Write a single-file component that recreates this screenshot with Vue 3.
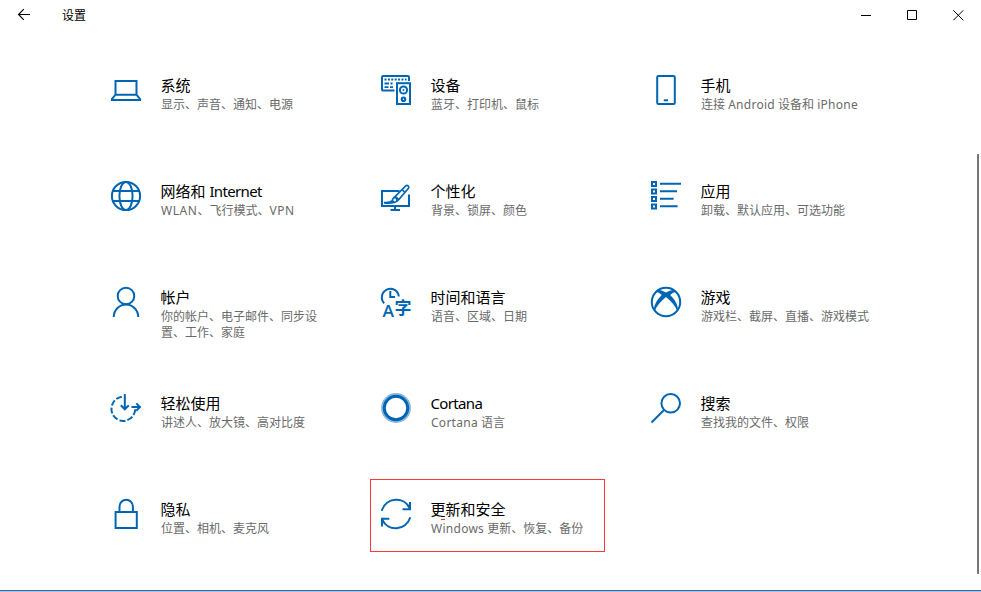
<script setup>
const items = [
  { icon: 'system', title: '系统', desc: '显示、声音、通知、电源' },
  { icon: 'devices', title: '设备', desc: '蓝牙、打印机、鼠标' },
  { icon: 'phone', title: '手机', desc: '连接 Android 设备和 iPhone' },
  { icon: 'network', title: '网络和 Internet', desc: 'WLAN、飞行模式、VPN' },
  { icon: 'personal', title: '个性化', desc: '背景、锁屏、颜色' },
  { icon: 'apps', title: '应用', desc: '卸载、默认应用、可选功能' },
  { icon: 'account', title: '帐户', desc: '你的帐户、电子邮件、同步设置、工作、家庭' },
  { icon: 'time', title: '时间和语言', desc: '语音、区域、日期' },
  { icon: 'gaming', title: '游戏', desc: '游戏栏、截屏、直播、游戏模式' },
  { icon: 'ease', title: '轻松使用', desc: '讲述人、放大镜、高对比度' },
  { icon: 'cortana', title: 'Cortana', desc: 'Cortana 语言' },
  { icon: 'search', title: '搜索', desc: '查找我的文件、权限' },
  { icon: 'privacy', title: '隐私', desc: '位置、相机、麦克风' },
  { icon: 'update', title: '更新和安全', desc: 'Windows 更新、恢复、备份', marked: true },
]

// Latin runs get their own tracking next to the full-width characters.
function runs(text) {
  return text
    .split(/([A-Za-z]+)/)
    .filter(Boolean)
    .map((value) => ({ value, latin: /^[A-Za-z]/.test(value), caps: /^[A-Z]+$/.test(value) }))
}
</script>

<template>
  <div class="window">
    <header class="titlebar">
      <svg class="back" width="14" height="14" viewBox="0 0 14 14"><path d="M13 6.500H1.500M6.800 1.200 1.500 6.500l5.300 5.300" /></svg>
      <span class="caption">设置</span>
      <div class="controls">
        <svg width="11" height="11" viewBox="0 0 11 11"><path d="M0 5.5h10" /></svg>
        <svg width="11" height="11" viewBox="0 0 11 11"><path d="M.5.5h9v9h-9z" /></svg>
        <svg width="11" height="11" viewBox="0 0 11 11"><path d="m.3.3 10 10M10.300.3l-10 10" /></svg>
      </div>
    </header>

    <main class="body">
      <div class="grid">
        <div v-for="item in items" :key="item.icon" class="item" :class="{ marked: item.marked }">
          <svg class="icon" width="32" height="32" viewBox="0 0 32 32">
            <g v-if="item.icon === 'system'">
              <path d="M5.500 20.700V7h21v13.700M5.500 20.700h21l3.600 4.500V26H1.900v-.8z" />
            </g>
            <g v-else-if="item.icon === 'devices'">
              <path d="M14.500 16.600H3.200A1.200 1.200 0 0 1 2 15.400V3.200A1.200 1.200 0 0 1 3.200 2h24.600a1.200 1.200 0 0 1 1.200 1.200V7" />
              <path class="thin" d="M4.500 5.500h22" stroke-dasharray="2 1.400" />
              <path class="thin" d="M4.500 9.500h4.500M10.500 9.500h2M4.500 13.200h4M10 13.200h3" />
              <rect x="17" y="9.200" width="13" height="20.800" />
              <circle cx="23.500" cy="16" r="3.600" />
              <circle class="solid" cx="23.500" cy="16" r="1" />
              <circle class="solid" cx="23.500" cy="25.300" r="2.800" />
              <circle class="hole" cx="23.500" cy="25.300" r=".7" />
            </g>
            <g v-else-if="item.icon === 'phone'">
              <rect x="7.200" y="2" width="17.600" height="28" rx="1.200" />
              <path d="M13.800 26.300H18" />
            </g>
            <g v-else-if="item.icon === 'network'">
              <circle cx="16" cy="16" r="14.100" />
              <ellipse cx="16" cy="16" rx="6.600" ry="14.100" />
              <path d="M3 10.900h26M3 21.100h26" />
            </g>
            <g v-else-if="item.icon === 'personal'">
              <path d="M19.500 11H2v15h27V14.500M15 26v4M10.500 30h9.500" />
              <path class="edge" d="M26 5.700c1.400-1.100 3.600.9 2.500 2.500L18.800 19.600l-3.600-3.200zM22.500 10l3 2.800" />
              <path class="solid" d="M15 16c-2 .5-2.700 2-3.200 3.600-.6 1.800-3 2.200-7.800 2.100v2c6 .5 10 .2 12.700-1.400 1.300-.8 2-1.500 2.300-2.600z" />
              <circle class="hole" cx="14.700" cy="20" r="1.400" />
            </g>
            <g v-else-if="item.icon === 'apps'">
              <path d="M2 2h4v4H2zM2 9.500h4v4H2zM2 17h4v4H2zM2 24.500h4v4H2zM10 3.800h21M10 11.300h17M10 18.800h13.600M10 26.300h17.600" />
            </g>
            <g v-else-if="item.icon === 'account'">
              <circle cx="16" cy="10" r="8.300" />
              <path d="M3.700 31C4 23.600 9.500 18.400 16 18.400S28 23.600 28.300 31" />
            </g>
            <g v-else-if="item.icon === 'time'">
              <path d="M4.200 17.200A8.500 8.500 0 1 1 18.800 10.500M10.300 5v6H15" />
              <text class="glyph latin-glyph" x="2.600" y="31" font-size="17" textLength="11.500" lengthAdjust="spacingAndGlyphs">A</text>
              <text class="glyph" x="14.600" y="27.500" font-size="17">字</text>
            </g>
            <g v-else-if="item.icon === 'gaming'">
              <circle cx="16" cy="16" r="14.200" />
              <path class="solid" d="M5.300 6C7.500 3.200 10.500 3.400 16 6.600c5.500-3.200 8.500-3.400 10.700-.6-2.100-.3-4.300.8-6.500 3.100 5.800 5.600 8.800 11.900 7.300 16.600-1.900-5.200-5.900-10.300-11.500-14.700C10.400 15.400 6.400 20.500 4.500 25.700 3 21 6 14.700 11.800 9.100 9.600 6.800 7.400 5.700 5.300 6z" />
            </g>
            <g v-else-if="item.icon === 'ease'">
              <path d="M11.800 4.700A12.300 12.300 0 0 0 9 28.200" stroke-dasharray="6 2" />
              <path d="M9.500 28.400A12.300 12.300 0 0 0 25.300 16.200" stroke-dasharray="6 2" />
              <path d="M14.800 2v15M10.800 13.300l4 4 4-4M21.500 15.100h8.500M26.300 11.400 30 15.100l-3.700 3.700" />
            </g>
            <g v-else-if="item.icon === 'cortana'">
              <circle class="halo" cx="16" cy="16" r="13.800" />
              <circle class="ring" cx="16" cy="16" r="11.700" />
            </g>
            <g v-else-if="item.icon === 'search'">
              <circle cx="20.700" cy="11.300" r="9.300" />
              <path d="M14 18 1.500 30.500" />
            </g>
            <g v-else-if="item.icon === 'privacy'">
              <path d="M5.600 14h21.200v16H5.600zM9.500 14V8.500a6.700 6.700 0 0 1 13.400 0V14" />
            </g>
            <g v-else>
              <path d="M1.700 12.700C5.800-.8 24.500-2.200 29.700 10.500M30.300 19.300C26.200 32.800 7.500 34.200 2.300 21.500" />
              <path d="M30 4v7.300h-7.500M2 28.500v-7.800h7.300" />
            </g>
          </svg>
          <div class="text">
            <div class="title"><span v-for="(run, i) in runs(item.title)" :key="i" :class="{ latin: run.latin }">{{ run.value }}</span></div>
            <div class="desc"><span v-for="(run, i) in runs(item.desc)" :key="i" :class="{ latin: run.latin, caps: run.caps }">{{ run.value }}</span></div>
          </div>
          <i v-if="item.marked" class="tick"></i>
        </div>
      </div>
      <div class="scrollbar"></div>
    </main>
    <footer class="edge-line"></footer>
  </div>
</template>

<style>
body {
  margin: 0;
  background: #fff;
}
</style>

<style scoped>
.window {
  display: flex;
  flex-direction: column;
  box-sizing: border-box;
  width: 981px;
  height: 592px;
  overflow: hidden;
  background: #fff;
  color: #000;
  font-family: "Noto Sans", "Noto Sans CJK SC", sans-serif;
}
.titlebar {
  display: flex;
  align-items: center;
  height: 31px;
  padding: 0 17px;
  flex: none;
}
.titlebar svg {
  fill: none;
  stroke: #000;
  stroke-width: 1;
}
.titlebar .back {
  margin-bottom: 1px;
  stroke-width: 1.100;
}
.caption {
  margin-left: 31px;
  font-size: 12px;
  line-height: 16px;
}
.controls {
  display: flex;
  gap: 35px;
  margin-left: auto;
}
.body {
  display: flex;
  flex: 1;
  justify-content: space-between;
  padding: 24px 2px 0 100px;
}
.grid {
  display: grid;
  grid-template-columns: repeat(3, 235px);
  grid-auto-rows: 73px;
  gap: 33px 35px;
}
.item {
  position: relative;
  display: flex;
  align-items: flex-start;
  gap: 18px;
  box-sizing: border-box;
  padding: 18px 0 0 9px;
  border: 1px solid transparent;
}
.marked {
  border-color: #f93a3a;
}
.tick {
  position: absolute;
  left: 70px;
  top: 39px;
  width: 4px;
  height: 1px;
  background: #e43a3a;
}
.icon {
  flex: none;
  fill: none;
  stroke: #0065b3;
  stroke-width: 2;
  overflow: visible;
}
.icon .thin {
  stroke-width: 1.800;
}
.icon .edge {
  stroke-width: 1.700;
}
.icon .solid {
  fill: #0065b3;
  stroke: none;
}
.icon .hole {
  fill: #fff;
  stroke: none;
}
.icon .halo {
  stroke: #8cb8dc;
  stroke-width: 2.400;
}
.icon .ring {
  stroke-width: 3;
}
.icon .glyph {
  fill: #0065b3;
  stroke: none;
  font-family: "Noto Sans CJK SC", sans-serif;
  font-weight: 700;
}
.icon .latin-glyph {
  font-family: "Open Sans", "Noto Sans", sans-serif;
  font-weight: 600;
}
.text {
  width: 172px;
  padding-top: 1px;
}
.title {
  padding-left: 0.500px;
  font-size: 15px;
  line-height: 21px;
  white-space: nowrap;
}
.title .latin {
  letter-spacing: -0.650px;
}
.desc {
  width: 169px;
  margin-top: 1px;
  padding-left: 1px;
  color: #6a6a6a;
  font-size: 12px;
  line-height: 16px;
}
.desc .latin {
  letter-spacing: 0.270px;
}
.desc .caps {
  letter-spacing: 0.550px;
}
.scrollbar {
  width: 2px;
  height: 420px;
  margin-top: 99px;
  background: #767676;
}
.edge-line {
  height: 1px;
  flex: none;
  background: #1a70b9;
  border-bottom: 1px solid #b9bfc4;
  background-clip: content-box;
}
</style>
